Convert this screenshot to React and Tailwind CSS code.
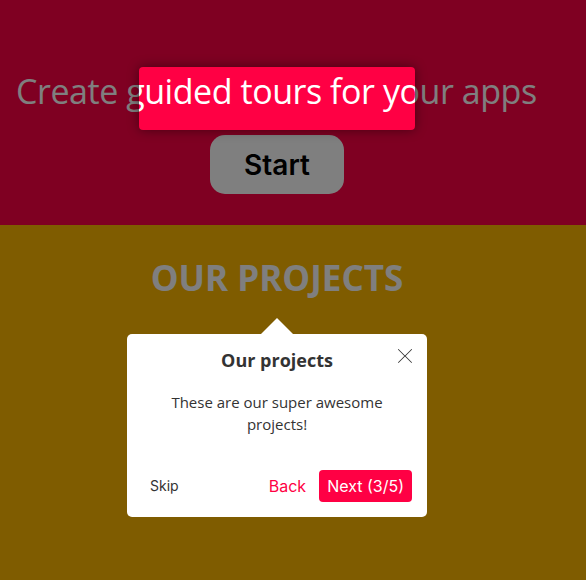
import React from "react";

const XIcon = () => (
  <svg width="14" height="14" viewBox="0 0 18 18" aria-hidden="true">
    <path
      d="M8.13911129,9.00268191 L0.171521827,17.0258467 C-0.0498027049,17.248715 -0.0498027049,17.6098394 0.171521827,17.8327545 C0.28204354,17.9443526 0.427188206,17.9998706 0.572051765,17.9998706 C0.71714958,17.9998706 0.862013139,17.9443526 0.972581703,17.8327545 L9.0000937,9.74924618 L17.0276057,17.8327545 C17.1384085,17.9443526 17.2832721,17.9998706 17.4281356,17.9998706 C17.5729992,17.9998706 17.718097,17.9443526 17.8286656,17.8327545 C18.0499901,17.6098862 18.0499901,17.2487618 17.8286656,17.0258467 L9.86135722,9.00268191 L17.8340066,0.973848225 C18.0553311,0.750979934 18.0553311,0.389855532 17.8340066,0.16694039 C17.6126821,-0.0556467968 17.254037,-0.0556467968 17.0329467,0.16694039 L9.00042166,8.25611765 L0.967006424,0.167268345 C0.745681892,-0.0553188426 0.387317931,-0.0553188426 0.165993399,0.167268345 C-0.0553311331,0.390136635 -0.0553311331,0.751261038 0.165993399,0.974176179 L8.13911129,9.00268191 Z"
      fill="#333333"
    />
  </svg>
);

export default function App() {
  return (
    <div className="relative w-[586px] h-[580px] overflow-hidden">
      {/* Hero */}
      <section className="h-[225px] bg-[#ff0044] pt-[68px]">
        <div className="w-[554px] flex flex-col items-center">
          <h1 className="self-start pl-4 text-[34px] leading-[46px] tracking-[-0.45px] text-white font-['Open_Sans',sans-serif] whitespace-nowrap">
            Create guided tours for your apps
          </h1>
          <button className="mt-[21px] w-[134px] h-[59px] rounded-[15px] bg-white text-black text-[28px] font-semibold font-['Inter',sans-serif]">
            Start
          </button>
        </div>
      </section>

      {/* Projects */}
      <section className="h-[355px] bg-[#ffb800] pt-[30px]">
        <div className="w-[554px] flex flex-col items-center">
          <h2 className="text-[35px] leading-[46px] font-bold text-white font-['Open_Sans',sans-serif]">
            OUR PROJECTS
          </h2>
        </div>
      </section>

      {/* Spotlight */}
      <div className="absolute left-[139px] top-[67px] w-[276px] h-[63px] rounded shadow-[0_0_12px_rgba(0,0,0,0.45),0_0_0_9999px_rgba(0,0,0,0.5)]" />

      {/* Tooltip */}
      <div className="absolute left-[127px] top-[334px] w-[300px]">
        <div className="absolute left-[134px] -top-[16px] w-0 h-0 border-x-[16px] border-x-transparent border-b-[16px] border-b-white" />
        <div className="relative bg-white rounded-[5px] p-[15px] text-center font-['Open_Sans',sans-serif] text-[#333]">
          <button className="absolute right-0 top-0 p-[15px] leading-none">
            <XIcon />
          </button>
          <h4 className="text-[18px] leading-[22px] font-bold">Our projects</h4>
          <div className="px-[10px] py-[20px] text-[15px] leading-[22px]">
            These are our super awesome projects!
          </div>
          <div className="mt-[15px] flex items-center font-['Inter',sans-serif]">
            <div className="flex-1 flex">
              <button className="p-2 text-[14px] leading-none text-[#333]">Skip</button>
            </div>
            <button className="p-2 mr-[5px] text-[16px] leading-none text-[#ff0044]">Back</button>
            <button className="p-2 rounded bg-[#ff0044] text-white text-[16px] leading-none">
              Next (3/5)
            </button>
          </div>
        </div>
      </div>
    </div>
  );
}
